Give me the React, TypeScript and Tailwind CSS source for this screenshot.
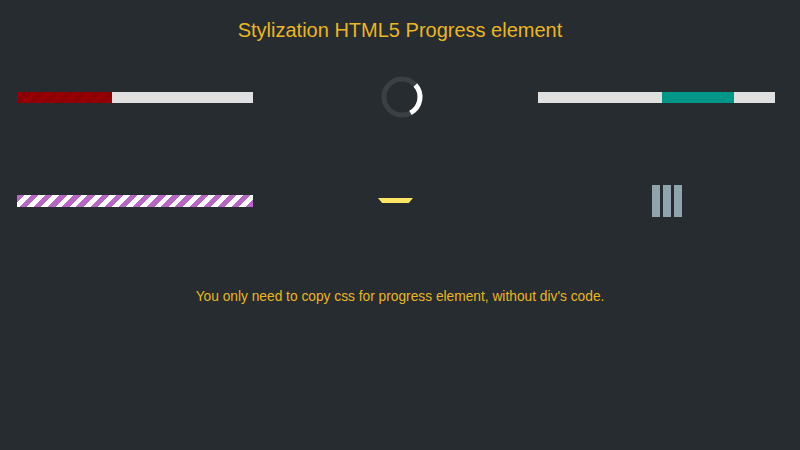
export default function App() {
  // arc of the spinner: from -42deg to 62deg around the centre
  const r = 18;
  const a0 = (-42 * Math.PI) / 180;
  const a1 = (62 * Math.PI) / 180;
  const p0 = [22 + r * Math.cos(a0), 22 + r * Math.sin(a0)];
  const p1 = [22 + r * Math.cos(a1), 22 + r * Math.sin(a1)];

  return (
    <div
      className="w-[800px] h-[450px] bg-[#272c30] flex flex-col"
      style={{ fontFamily: '"Liberation Sans", Arial, sans-serif' }}
    >
      <h1 className="text-[20px] leading-6 text-[#eab622] text-center mt-[18px]">
        Stylization HTML5 Progress element
      </h1>

      {/* first row */}
      <div className="grid grid-cols-3 mt-[32px] h-[46px] items-center">
        <div className="ml-[17px] w-[236px] h-[11px] bg-[#e0e0e0] flex">
          <div className="w-[95px] h-full bg-[repeating-linear-gradient(-45deg,#980000_0_5px,#8c0000_5px_10px)]" />
        </div>
        <div className="flex justify-center pl-[4px]">
          <svg width="44" height="44" viewBox="0 0 44 44">
            <circle cx="22" cy="22" r={r} fill="none" stroke="#3b4044" strokeWidth="5" />
            <path
              d={`M${p0[0]} ${p0[1]} A${r} ${r} 0 0 1 ${p1[0]} ${p1[1]}`}
              fill="none"
              stroke="#ffffff"
              strokeWidth="5"
            />
          </svg>
        </div>
        <div className="ml-[5px] w-[237px] h-[11px] bg-[#e0e0e0] flex">
          <div className="ml-[124px] w-[72px] h-full bg-[#009688]" />
        </div>
      </div>

      {/* second row */}
      <div className="grid grid-cols-3 mt-[65px] h-[32px] items-center">
        <div className="ml-[17px] w-[236px] h-[12px] bg-[repeating-linear-gradient(-45deg,#b866c6_0_5.2px,#ffffff_5.2px_10px)]" />
        <div className="flex justify-center pr-[9px]">
          <div className="w-[35px] h-[5px] -mt-[1px] bg-[#ffe566] [clip-path:polygon(0_0,100%_0,88%_100%,12%_100%)]" />
        </div>
        <div className="flex justify-center gap-[3px] pl-[1px]">
          <div className="w-[8px] h-[32px] bg-[#90a4ae]" />
          <div className="w-[8px] h-[32px] bg-[#90a4ae]" />
          <div className="w-[8px] h-[32px] bg-[#90a4ae]" />
        </div>
      </div>

      <p className="text-[13.75px] leading-5 text-[#eab622] text-center mt-[70px]">
        You only need to copy css for progress element, without div's code.
      </p>
    </div>
  );
}
